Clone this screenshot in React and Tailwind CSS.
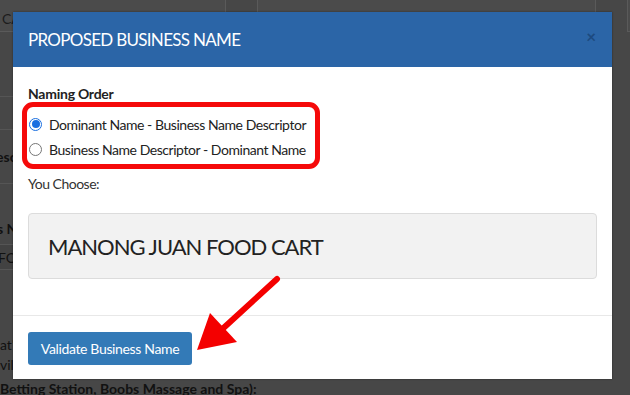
const font = { fontFamily: '"Lato", "Noto Sans", sans-serif' };

function Radio({ checked }) {
  return checked ? (
    <span className="flex h-[13px] w-[13px] shrink-0 items-center justify-center rounded-full border border-[#1a6fe0] bg-white">
      <span className="h-[8px] w-[8px] rounded-full bg-[#1a6fe0]" />
    </span>
  ) : (
    <span className="h-[13px] w-[13px] shrink-0 rounded-full border border-[#767676] bg-white" />
  );
}

function Backdrop() {
  return (
    <div className="flex h-full w-full flex-col text-[14px] font-bold text-[#111]">
      <div className="flex h-[32px] shrink-0 gap-[31px]">
        <div className="w-[226px] border-b border-r border-[#5a5a5a] bg-[#4b4b4b] pl-[2px] pt-[8px] font-normal text-[#1c1c1c]">CATEGORY</div>
        <div className="w-[339px] border-x border-b border-[#5a5a5a] bg-[#4b4b4b]" />
        <div className="flex-1 border-l border-b border-[#5a5a5a] bg-[#4b4b4b]" />
      </div>
      <div className="h-[65px] w-[226px] shrink-0 border-b border-[#555]" />
      <div className="h-[33px] w-[226px] shrink-0 border-b border-[#555]" />
      <div className="flex h-[54px] w-[226px] shrink-0 items-center border-b border-[#555]">
        <span className="-ml-[4px]">escription</span>
      </div>
      <div className="h-[28px] w-[226px] shrink-0" />
      <div className="flex h-[33px] w-[226px] shrink-0 items-center border-b border-[#555]">
        <span className="-ml-[3px]">s Name</span>
      </div>
      <div className="flex h-[25px] w-[226px] shrink-0 items-center border-b border-[#555] bg-[#424242] font-normal">
        <span className="-ml-[2px]">FOOD</span>
      </div>
      <div className="h-[65px] shrink-0" />
      <div className="shrink-0 font-normal leading-[20px]">at's the</div>
      <div className="shrink-0 font-normal leading-[20px]">vil</div>
      <div className="mt-[4px] shrink-0 whitespace-nowrap leading-[20px]">Betting Station, Boobs Massage and Spa):</div>
    </div>
  );
}

export default function App() {
  return (
    <div className="relative h-[395px] w-[630px] overflow-hidden bg-[#474747]" style={font}>
      <Backdrop />
      <div className="absolute left-[13px] top-[12px] flex h-[367px] w-[599px] flex-col bg-white shadow-[0_0_2px_rgba(0,0,0,0.4)]">
        <div className="flex h-[55px] shrink-0 items-center justify-between bg-[#2b65a7] pl-[15px] pr-[16px]">
          <h2 className="text-[17px] font-normal tracking-[-0.7px] text-white">PROPOSED BUSINESS NAME</h2>
          <span className="-mt-[6px] text-[17px] font-bold leading-none text-[#1d4a7f]">×</span>
        </div>
        <div className="flex flex-1 flex-col px-[15px] pt-[17px]">
          <div className="text-[14px] font-bold leading-[20px] tracking-[-0.25px] text-[#222]">Naming Order</div>
          <div className="-ml-[6px] -mt-[2px] w-[298px] rounded-[11px] border-[5px] border-[#f50a0a] pb-[3px] pl-[2px] pt-[5px]">
            <label className="flex h-[24px] items-center gap-[7px] whitespace-nowrap text-[14px] tracking-[-0.45px] text-[#222]">
              <Radio checked />
              <span>Dominant Name - Business Name Descriptor</span>
            </label>
            <label className="mt-[1px] flex h-[24px] items-center gap-[7px] whitespace-nowrap text-[14px] tracking-[-0.45px] text-[#222]">
              <Radio />
              <span>Business Name Descriptor - Dominant Name</span>
            </label>
          </div>
          <div className="mt-[5px] text-[14px] leading-[20px] tracking-[-0.5px] text-[#333]">You Choose:</div>
          <div className="mt-[19px] flex h-[66px] items-center rounded-[4px] border border-[#dcdcdc] bg-[#f2f2f2] pl-[19px]">
            <span className="text-[22px] tracking-[-1px] text-[#222]">MANONG JUAN FOOD CART</span>
          </div>
        </div>
        <div className="flex h-[64px] shrink-0 items-center border-t border-[#e8e8e8] px-[15px] pt-[2px]">
          <button className="h-[33px] w-[164px] rounded-[3px] bg-[#337ab7] text-[14px] tracking-[-0.35px] text-white">Validate Business Name</button>
        </div>
      </div>
      <svg className="absolute left-0 top-0" width="630" height="395">
        <line x1="277" y1="279" x2="218" y2="333" stroke="#f40000" strokeWidth="6" strokeLinecap="round" />
        <polygon points="197,350 210,313 237,342" fill="#f40000" />
      </svg>
    </div>
  );
}
